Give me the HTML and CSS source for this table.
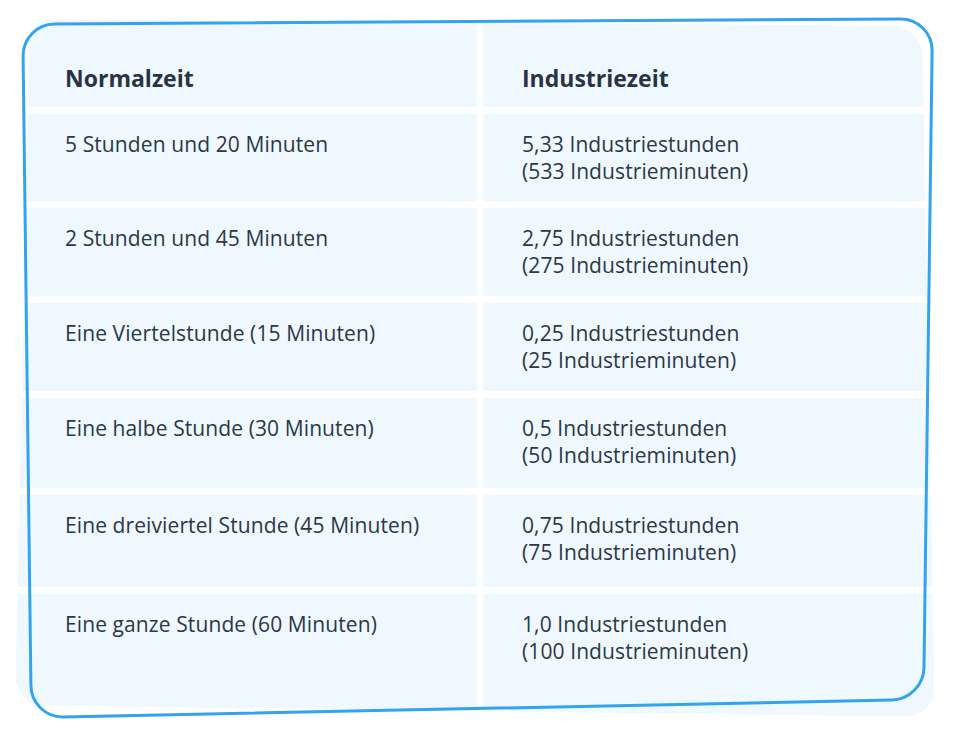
FILE: index.html
```html
<!DOCTYPE html>
<html lang="de">
<head>
<meta charset="utf-8">
<title>Normalzeit und Industriezeit</title>
<link rel="stylesheet" href="styles.css">
</head>
<body>
<div class="stage">
  <div class="grid">
    <div class="cell head left">Normalzeit</div>
    <div class="cell head right">Industriezeit</div>
    <div class="cell left">5 Stunden und 20 Minuten</div>
    <div class="cell right">5,33 Industriestunden<br>(533 Industrieminuten)</div>
    <div class="cell left">2 Stunden und 45 Minuten</div>
    <div class="cell right">2,75 Industriestunden<br>(275 Industrieminuten)</div>
    <div class="cell left">Eine Viertelstunde (15 Minuten)</div>
    <div class="cell right">0,25 Industriestunden<br>(25 Industrieminuten)</div>
    <div class="cell left">Eine halbe Stunde (30 Minuten)</div>
    <div class="cell right">0,5 Industriestunden<br>(50 Industrieminuten)</div>
    <div class="cell left">Eine dreiviertel Stunde (45 Minuten)</div>
    <div class="cell right">0,75 Industriestunden<br>(75 Industrieminuten)</div>
    <div class="cell left">Eine ganze Stunde (60 Minuten)</div>
    <div class="cell right">1,0 Industriestunden<br>(100 Industrieminuten)</div>
  </div>
  <svg class="frame" width="960" height="737" viewBox="0 0 960 737" aria-hidden="true">
    <path d="M54.7 24 L900.5 19 C918.2 18.9 932.3 33.1 932.1 50.8 L924 667.5 C923.8 685.2 909.3 699.7 891.6 700.1 L63.3 716.9 C45.6 717.3 31.1 703.3 30.9 685.6 L23.1 56.2 C22.9 38.5 37 24.1 54.7 24 Z" fill="none" stroke="#33a3ee" stroke-width="3"/>
  </svg>
</div>
</body>
</html>
```
FILE: styles.css
```css
html, body {
  margin: 0;
  padding: 0;
  background: #ffffff;
}

.stage {
  position: relative;
  width: 960px;
  height: 737px;
  padding: 18px 0 0 15px;
  box-sizing: border-box;
  font-family: "Open Sans", "Noto Sans", sans-serif;
  color: #2c3747;
}

.grid {
  width: 920px;
  height: 700px;
  display: grid;
  grid-template-columns: 462px 452px;
  grid-template-rows: 89px 87px 88px 88px 90px 92px 1fr;
  column-gap: 6px;
  row-gap: 7px;
  clip-path: path("M35 1.2 L877 7.8 C893.6 7.9 907.3 21.4 907.6 38 L919.4 669 C919.7 685.6 906.6 698.8 890 698.6 L30 687.4 C13.4 687.2 0.3 673.6 0.7 657 L14.6 21 C14.8 10 24 1.1 35 1.2 Z");
}

.cell {
  background: #eff8fe;
  font-size: 21px;
  line-height: 27px;
  padding-top: 17px;
  letter-spacing: 0.1px;
}

.cell.left {
  padding-left: 50px;
}

.cell.right {
  padding-left: 39px;
}

.cell.head {
  font-weight: 700;
  font-size: 23px;
  letter-spacing: 0;
  padding-top: 47px;
  color: #283343;
}

.frame {
  position: absolute;
  left: 0;
  top: 0;
  pointer-events: none;
}
```
